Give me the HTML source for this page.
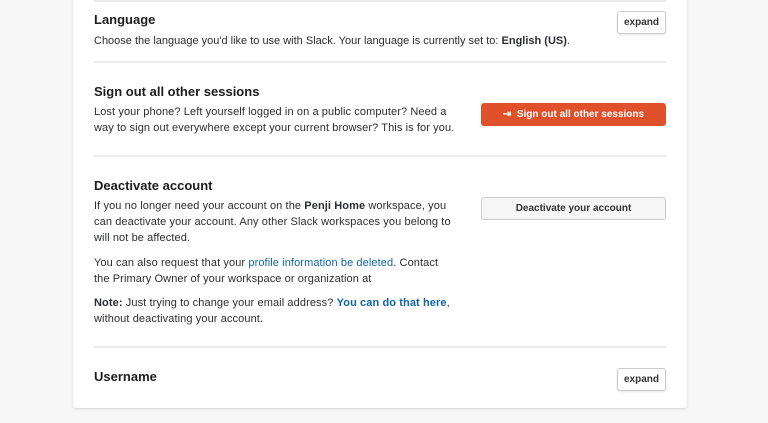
<!DOCTYPE html>
<html><head><style>
body{margin:0;width:768px;height:423px;background:#f7f7f7;font-family:"Liberation Sans",sans-serif;color:#1d1c1d;position:relative;overflow:hidden}
.card{position:absolute;left:73px;top:-5px;width:614px;height:413px;background:#fff;box-shadow:0 1px 2px rgba(0,0,0,.15);border-radius:0 0 3px 3px}
.hr{position:absolute;left:94px;width:572px;height:2px;background:#ebebeb}
.t{position:absolute;left:94px;font-weight:bold;font-size:13px;line-height:16px;white-space:nowrap}
.p{position:absolute;left:94px;font-size:11px;line-height:16px;color:#2c2d30;white-space:nowrap;letter-spacing:0.1px}
.btn{position:absolute;box-sizing:border-box;font-size:10px;font-weight:bold;text-align:center;border-radius:3px}
.exp{left:617px;width:49px;height:23px;line-height:21px;border:1px solid #ccc;background:#fff;box-shadow:0 1px 2px rgba(0,0,0,.1);color:#333}
a{color:#1264a3;text-decoration:none}
</style></head><body>
<div class="card"></div>
<div class="hr" style="top:0"></div>
<div class="t" style="top:12px">Language</div>
<div class="p" style="top:33px;letter-spacing:0">Choose the language you'd like to use with Slack. Your language is currently set to: <b>English (US)</b>.</div>
<div class="btn exp" style="top:11px">expand</div>
<div class="hr" style="top:61px"></div>
<div class="t" style="top:84px">Sign out all other sessions</div>
<div class="p" style="top:104px">Lost your phone? Left yourself logged in on a public computer? Need a<br>way to sign out everywhere except your current browser? This is for you.</div>
<div class="btn" style="left:481px;top:103px;width:185px;height:23px;line-height:23px;background:#e0502a;color:#fff;">&#x21E5;&nbsp; Sign out all other sessions</div>
<div class="hr" style="top:155px"></div>
<div class="t" style="top:178px">Deactivate account</div>
<div class="p" style="top:198px">If you no longer need your account on the <b>Penji Home</b> workspace, you<br>can deactivate your account. Any other Slack workspaces you belong to<br>will not be affected.</div>
<div class="p" style="top:255px">You can also request that your <a>profile information be deleted</a>. Contact<br>the Primary Owner of your workspace or organization at</div>
<div class="p" style="top:295px"><b>Note:</b> Just trying to change your email address? <a><b>You can do that here</b></a>,<br>without deactivating your account.</div>
<div class="btn" style="left:481px;top:197px;width:185px;height:23px;line-height:21px;background:#f6f6f6;border:1px solid #ccc;color:#333">Deactivate your account</div>
<div class="hr" style="top:346px"></div>
<div class="t" style="top:369px">Username</div>
<div class="btn exp" style="top:368px">expand</div>
</body></html>
